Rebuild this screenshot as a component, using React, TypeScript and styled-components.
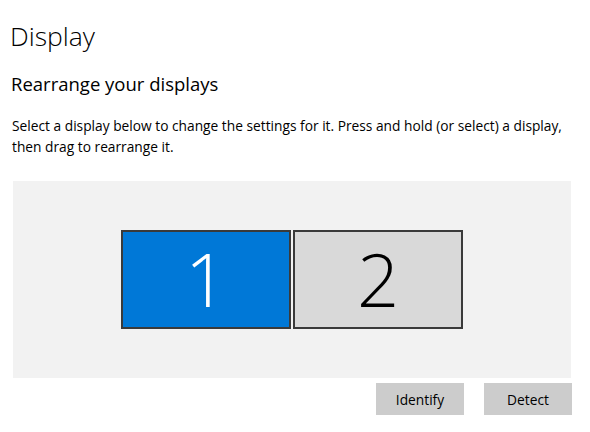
import React from 'react';
import styled, { createGlobalStyle } from 'styled-components';

const GlobalStyle = createGlobalStyle`
  html, body {
    margin: 0;
    padding: 0;
    background: #ffffff;
  }
  body {
    font-family: "Open Sans", "Noto Sans", "Liberation Sans", sans-serif;
    color: #000;
  }
`;

const Page = styled.div`
  width: 590px;
  height: 432px;
  box-sizing: border-box;
  padding: 18px 18px 0 10px;
  overflow: hidden;
`;

const Title = styled.h1`
  margin: 0;
  font-size: 26.5px;
  font-weight: 300;
  line-height: 36px;
  color: #000;
`;

const SubTitle = styled.h2`
  margin: 17px 0 0 1px;
  font-size: 18.5px;
  font-weight: 400;
  line-height: 26px;
  color: #000;
`;

const Description = styled.p`
  margin: 18px 0 0 2px;
  font-size: 13.75px;
  line-height: 21px;
  color: #000;
  width: 556px;
`;

const Arrangement = styled.div`
  margin: 24px 0 0 3px;
  width: 558px;
  height: 197px;
  background: #f2f2f2;
  display: flex;
  align-items: center;
  justify-content: center;
  gap: 2px;
`;

const Monitor = styled.div<{ $active?: boolean }>`
  width: 170px;
  height: 99px;
  box-sizing: border-box;
  border: 2px solid #3a3a3a;
  background: ${(p) => (p.$active ? '#0078d7' : '#d9d9d9')};
  color: ${(p) => (p.$active ? '#ffffff' : '#000000')};
  display: flex;
  align-items: center;
  justify-content: center;
  font-size: 74px;
  font-weight: 300;
  line-height: 1;
  padding-bottom: 2px;
`;

const Actions = styled.div`
  display: flex;
  justify-content: flex-end;
  gap: 20px;
  width: 562px;
  margin-top: 5px;
`;

const Button = styled.button`
  width: 88px;
  height: 32px;
  border: none;
  background: #cccccc;
  font-family: inherit;
  font-size: 13.75px;
  color: #000;
  padding: 0;
  cursor: pointer;
`;

export default function App() {
  return (
    <>
      <GlobalStyle />
      <Page>
        <Title>Display</Title>
        <SubTitle>Rearrange your displays</SubTitle>
        <Description>
          Select a display below to change the settings for it. Press and hold (or select) a display,
          then drag to rearrange it.
        </Description>
        <Arrangement>
          <Monitor $active>1</Monitor>
          <Monitor>2</Monitor>
        </Arrangement>
        <Actions>
          <Button>Identify</Button>
          <Button>Detect</Button>
        </Actions>
      </Page>
    </>
  );
}
